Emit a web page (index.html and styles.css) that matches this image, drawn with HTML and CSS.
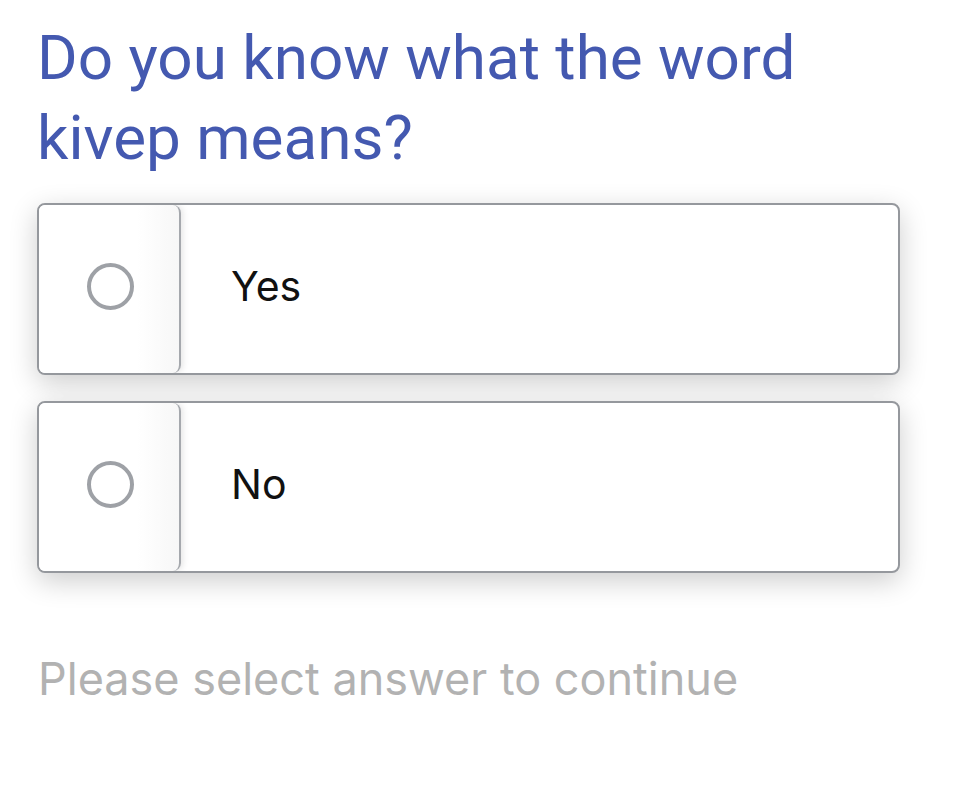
FILE: index.html
```html
<!DOCTYPE html>
<html lang="en">
<head>
<meta charset="utf-8">
<link rel="stylesheet" href="styles.css">
</head>
<body>
<main class="page">
  <h1 class="question">Do you know what the word kivep means?</h1>
  <div class="options">
    <div class="option">
      <div class="radio-cell"><span class="radio"></span></div>
      <div class="label">Yes</div>
    </div>
    <div class="option">
      <div class="radio-cell"><span class="radio"></span></div>
      <div class="label">No</div>
    </div>
  </div>
  <p class="hint">Please select answer to continue</p>
</main>
</body>
</html>
```

FILE: styles.css
```css
html, body {
  margin: 0;
  background: #ffffff;
}
.page {
  padding: 18px 56px 0 37px;
}
.question {
  margin: 0;
  font-family: Roboto, "Liberation Sans", sans-serif;
  font-weight: 400;
  font-size: 62px;
  line-height: 80px;
  color: #4459b0;
}
.options {
  margin-top: 25px;
  display: flex;
  flex-direction: column;
  gap: 26px;
}
.option {
  display: flex;
  height: 168px;
  border: 2px solid #95989d;
  border-radius: 8px;
  background: #ffffff;
  box-shadow: 0 8px 28px rgba(0, 0, 0, 0.2);
  overflow: hidden;
}
.radio-cell {
  width: 142px;
  flex: none;
  display: flex;
  align-items: center;
  justify-content: center;
  padding-bottom: 6px;
  box-sizing: border-box;
  border-radius: 0 8px 8px 0;
  border-right: 2px solid #a5a8ad;
  box-shadow: 2px 0 6px rgba(0, 0, 0, 0.1);
  background: linear-gradient(90deg, #ffffff 70%, #f7f7f7 100%);
  position: relative;
  z-index: 1;
}
.radio {
  width: 39px;
  height: 39px;
  border: 4px solid #9ea1a6;
  border-radius: 50%;
  box-sizing: content-box;
  margin-left: 2px;
}
.label {
  flex: 1;
  display: flex;
  align-items: center;
  padding-left: 50px;
  padding-bottom: 6px;
  font-family: Inter, "Open Sans", sans-serif;
  font-size: 41px;
  color: #111111;
}
.hint {
  margin: 78px 0 0 1px;
  font-family: Inter, "Open Sans", sans-serif;
  font-size: 45px;
  color: #b2b2b2;
}
```
